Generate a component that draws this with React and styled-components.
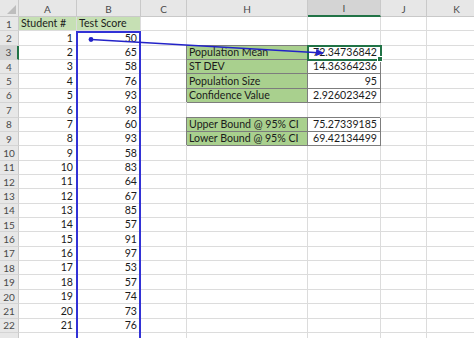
import React from "react";
import styled, { createGlobalStyle, css } from "styled-components";

const GlobalStyle = createGlobalStyle`
  html, body {
    margin: 0;
    padding: 0;
    background: #ffffff;
    overflow: hidden;
  }
  body {
    font-family: Lato, "Liberation Sans", sans-serif;
  }
`;

const COLS = ["A", "B", "C", "H", "I", "J", "K"];
const SCORES = [50, 65, 58, 76, 93, 93, 60, 93, 58, 83, 64, 67, 85, 57, 91, 97, 53, 57, 74, 73, 76];

const STATS = {
  3: ["Population Mean", "72.34736842"],
  4: ["ST DEV", "14.36364236"],
  5: ["Population Size", "95"],
  6: ["Confidence Value", "2.926023429"],
  8: ["Upper Bound @ 95% CI", "75.27339185"],
  9: ["Lower Bound @ 95% CI", "69.42134499"],
};

const Sheet = styled.div`
  position: relative;
  display: grid;
  grid-template-columns: 19px 58px 64px 46px 121px 73px 46px 60px;
  grid-template-rows: 17px repeat(23, 14.36px);
  width: 474px;
  height: 338px;
  overflow: hidden;
  font-size: 10.6px;
  color: #1b1b1b;
`;

const Corner = styled.div`
  background: #e7e7e7;
  border-right: 1px solid #c9c9c9;
  border-bottom: 1px solid #c9c9c9;
  box-sizing: border-box;
  display: flex;
  align-items: flex-end;
  justify-content: flex-end;
  padding: 0 2px 2px 0;
`;

const ColHead = styled.div`
  box-sizing: border-box;
  background: ${(p) => (p.$active ? "#d4d4d4" : "#e7e7e7")};
  border-right: 1px solid #c9c9c9;
  border-bottom: ${(p) => (p.$active ? "2px solid #217346" : "1px solid #c9c9c9")};
  color: #4a4a4a;
  display: flex;
  align-items: center;
  justify-content: center;
  font-size: 10px;
  padding-top: 1px;
`;

const RowHead = styled.div`
  box-sizing: border-box;
  background: ${(p) => (p.$active ? "#d4d4d4" : "#e7e7e7")};
  border-right: ${(p) => (p.$active ? "2px solid #217346" : "1px solid #c9c9c9")};
  border-bottom: 1px solid #d4d4d4;
  color: #4a4a4a;
  display: flex;
  align-items: center;
  justify-content: center;
  font-size: 10px;
`;

const Cell = styled.div`
  position: relative;
  box-sizing: border-box;
  border-right: 1px solid #dcdcdc;
  border-bottom: 1px solid #dcdcdc;
  background: ${(p) => p.$fill || "transparent"};
  display: flex;
  align-items: flex-end;
  justify-content: ${(p) => (p.$right ? "flex-end" : "flex-start")};
  padding: 0 3px 0 2px;
  line-height: 13px;
  white-space: nowrap;
  overflow: visible;
  ${(p) =>
    p.$boxed &&
    css`
      border-right-color: #7d7d7d;
      border-bottom-color: #7d7d7d;
      box-shadow: -1px -1px 0 #7d7d7d;
    `}
  ${(p) =>
    p.$selected &&
    css`
      outline: 2px solid #217346;
      outline-offset: -1px;
      z-index: 1;
    `}
`;

const FillHandle = styled.span`
  position: absolute;
  right: -3px;
  bottom: -3px;
  width: 4px;
  height: 4px;
  background: #217346;
  border: 1px solid #ffffff;
`;

const PrecedentBox = styled.div`
  position: absolute;
  left: 76px;
  top: 31px;
  width: 65px;
  height: 320px;
  box-sizing: border-box;
  border: 2px solid #3232d6;
  pointer-events: none;
  z-index: 2;
`;

const ArrowLayer = styled.svg`
  position: absolute;
  left: 0;
  top: 0;
  z-index: 3;
  pointer-events: none;
`;

function cellFor(row, col) {
  if (row === 1) {
    if (col === "A") return { text: "Student #", fill: "#c6e0b4" };
    if (col === "B") return { text: "Test Score", fill: "#c6e0b4" };
    return {};
  }
  if (row >= 2 && row <= 22) {
    if (col === "A") return { text: String(row - 1), right: true };
    if (col === "B") return { text: String(SCORES[row - 2]), right: true };
  }
  const stat = STATS[row];
  if (stat) {
    if (col === "H") return { text: stat[0], fill: "#a9d08e", boxed: true };
    if (col === "I") return { text: stat[1], right: true, boxed: true, selected: row === 3 };
  }
  return {};
}

export default function App() {
  const rows = Array.from({ length: 23 }, (_, i) => i + 1);
  return (
    <>
      <GlobalStyle />
      <Sheet>
        <Corner>
          <svg width="9" height="9" viewBox="0 0 9 9">
            <polygon points="9,0 9,9 0,9" fill="#bdbdbd" />
          </svg>
        </Corner>
        {COLS.map((c) => (
          <ColHead key={c} $active={c === "I"}>
            {c}
          </ColHead>
        ))}
        {rows.map((r) => (
          <React.Fragment key={r}>
            {/* the last row is only a sliver at the window's bottom edge */}
            <RowHead $active={r === 3}>{r <= 22 ? r : ""}</RowHead>
            {COLS.map((c) => {
              const d = cellFor(r, c);
              return (
                <Cell
                  key={c}
                  $fill={d.fill}
                  $right={d.right}
                  $boxed={d.boxed}
                  $selected={d.selected}
                >
                  {d.text}
                  {d.selected && <FillHandle />}
                </Cell>
              );
            })}
          </React.Fragment>
        ))}
        <PrecedentBox />
        <ArrowLayer width="474" height="338" viewBox="0 0 474 338">
          <defs>
            <marker id="tip" markerWidth="8" markerHeight="8" refX="7" refY="4" orient="auto" markerUnits="userSpaceOnUse">
              <polygon points="0,0.5 8,4 0,7.5" fill="#2323c8" />
            </marker>
          </defs>
          <circle cx="91" cy="39.5" r="2.4" fill="#2323c8" />
          <line x1="91" y1="39.5" x2="323" y2="53" stroke="#2323c8" strokeWidth="1.4" markerEnd="url(#tip)" />
        </ArrowLayer>
      </Sheet>
    </>
  );
}
